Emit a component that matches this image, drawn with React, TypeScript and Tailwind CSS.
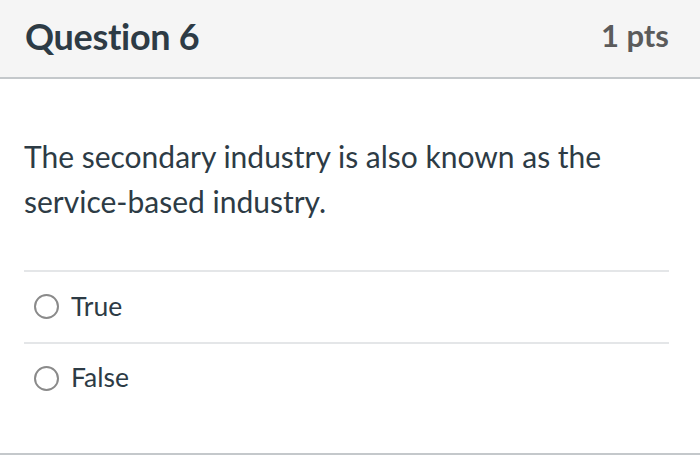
import React from "react";

function Radio() {
  return <span className="inline-block w-[25px] h-[25px] rounded-full border-[2.5px] border-[#8a8a8a] bg-white shrink-0" />;
}

export default function App() {
  return (
    <div className="w-[700px] h-[460px] bg-white flex flex-col" style={{ fontFamily: "Lato, 'Liberation Sans', sans-serif" }}>
      <div className="h-[79px] bg-[#f5f5f5] border-b-2 border-[#c4c8cb] flex items-center justify-between px-[25px] pb-[6px]">
        <div className="text-[36px] font-bold text-[#2d3b45] tracking-[-0.3px]">Question 6</div>
        <div className="text-[31px] font-bold text-[#5b5b5b] pr-[6px]">1 pts</div>
      </div>
      <div className="px-[24px] pt-[55px] text-[30px] leading-[45px] text-[#2d3b45]">
        The secondary industry is also known as the
        <br />
        service-based industry.
      </div>
      <div className="ml-[24px] mr-[31px] mt-[46px] border-t-2 border-[#e4e6e8]">
        <div className="h-[72px] flex items-center gap-[12px] pl-[10px] pb-[1px] border-b-2 border-[#e4e6e8]">
          <Radio />
          <span className="text-[26.5px] text-[#2d3b45]">True</span>
        </div>
        <div className="h-[70px] flex items-center gap-[12px] pl-[10px] pb-[2px]">
          <Radio />
          <span className="text-[26.5px] text-[#2d3b45]">False</span>
        </div>
      </div>
      <div className="mt-auto mb-[5px] border-b-2 border-[#c4c8cb]" />
    </div>
  );
}
